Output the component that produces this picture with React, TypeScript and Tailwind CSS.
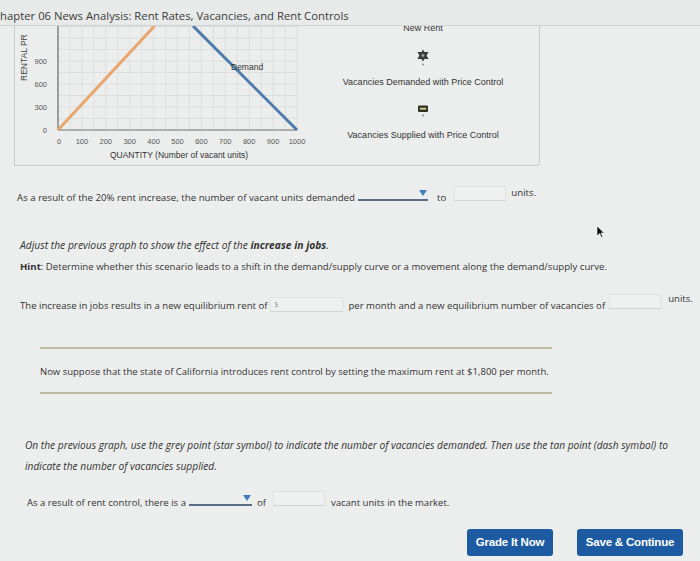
import React from "react";

const xTicks = [0, 100, 200, 300, 400, 500, 600, 700, 800, 900, 1000];
const yTicks = [0, 300, 600, 900];

// plot geometry in page coordinates
const X0 = 58;
const X1 = 297;
const Y0 = 130;
const PX = (X1 - X0) / 1000;
const PY = 23 / 300;

function Chart() {
  const vLines = Array.from({ length: 21 }, (_, i) => X0 + i * PX * 50);
  const hLines = Array.from({ length: 10 }, (_, i) => Y0 - i * PY * 150);
  return (
    <svg width="305" height="139" className="shrink-0 block">
      <g transform="translate(-15,-26)" fontFamily="Liberation Sans, Arial, sans-serif">
        {vLines.map((x, i) => (
          <line key={"v" + i} x1={x} x2={x} y1={20} y2={Y0} stroke="#d9dcdc" strokeWidth="0.8" />
        ))}
        {hLines.map((y, i) => (
          <line key={"h" + i} x1={X0} x2={X1} y1={y} y2={y} stroke="#d9dcdc" strokeWidth="0.8" />
        ))}
        <line x1={X0} x2={X0} y1={20} y2={Y0} stroke="#555" strokeWidth="1" />
        <line x1={X0} x2={X1} y1={Y0} y2={Y0} stroke="#777" strokeWidth="1" />

        {yTicks.map((t) => (
          <text key={t} x={47} y={Y0 - t * PY + 3} fontSize="7.5" fill="#555" textAnchor="end">
            {t}
          </text>
        ))}
        {xTicks.map((t) => (
          <text key={t} x={X0 + t * PX + (t === 0 ? 1 : 0)} y={144} fontSize="7.5" fill="#555" textAnchor="middle">
            {t}
          </text>
        ))}
        <text x={179} y={158} fontSize="8.5" fill="#333" textAnchor="middle">
          QUANTITY (Number of vacant units)
        </text>
        <text x={27} y={81} fontSize="8.5" fill="#444" transform="rotate(-90 27 81)">
          RENTAL PR
        </text>

        {/* supply */}
        <line x1={X0} y1={Y0} x2={X0 + (104 * 90) / 97} y2={26} stroke="#e9a66c" strokeWidth="3" />
        {/* demand */}
        <line x1={X1} y1={Y0} x2={X1 - 104} y2={26} stroke="#4c7cab" strokeWidth="3" />
        <text x={231} y={70} fontSize="8.5" fill="#333">
          Demand
        </text>
      </g>
    </svg>
  );
}

function StarIcon() {
  return (
    <svg width="14" height="17" viewBox="0 0 14 17" className="block">
      <polygon points="7,0.5 12.6,10 1.4,10" fill="#3b3b3b" />
      <polygon points="7,12.5 12.6,3 1.4,3" fill="#3b3b3b" />
      <circle cx="7" cy="6.5" r="1.4" fill="#a0a0a0" />
      <circle cx="7" cy="15.5" r="0.9" fill="#888" />
    </svg>
  );
}

function DashIcon() {
  return (
    <svg width="12" height="14" viewBox="0 0 12 14" className="block">
      <rect x="1" y="1.5" width="10" height="6.5" rx="1" fill="#2f3422" />
      <rect x="2.8" y="3.8" width="6.4" height="1.8" fill="#d9d39a" />
      <circle cx="6" cy="11.5" r="0.9" fill="#888" />
    </svg>
  );
}

function Dropdown({ w }: { w: string }) {
  return (
    <span className={`relative inline-block h-[15px] border-b-2 border-[#5b6d85] ${w}`}>
      <svg width="8" height="6" viewBox="0 0 8 6" className="absolute right-[1px] top-[4px]">
        <polygon points="0,0 8,0 4,6" fill="#3f7fc0" />
      </svg>
    </span>
  );
}

function Blank({ w, children }: { w: string; children?: React.ReactNode }) {
  return (
    <span
      className={`inline-flex h-[15px] items-center border border-[#dfe2e2] border-b-[#d2d5d5] bg-[#eff1f0] pl-[3px] text-[7px] text-[#999] ${w}`}
    >
      {children}
    </span>
  );
}

export default function App() {
  return (
    <div className="relative h-[561px] w-[700px] overflow-hidden bg-[#eceeed] font-['Open_Sans','Liberation_Sans',sans-serif] text-[#333]">
      {/* title bar */}
      <div className="h-[26px] overflow-hidden whitespace-nowrap border-b border-[#cfd2d1] bg-[#e8eae9] pt-[8px]">
        <h1 className="-ml-[7px] text-[11.3px] leading-[16px] text-[#3a3a3a]">
          Chapter 06 News Analysis: Rent Rates, Vacancies, and Rent Controls
        </h1>
      </div>

      {/* graph panel */}
      <div className="ml-[14px] flex h-[140px] w-[526px] overflow-hidden rounded-br-[4px] border border-t-0 border-[#c9cccb]">
        <Chart />
        <div className="flex w-[206px] flex-col items-center font-['Liberation_Sans',Arial,sans-serif] text-[9px] leading-[11px] text-[#333]">
          <div className="-mt-[3px]">New Rent</div>
          <div className="mt-[15px]">
            <StarIcon />
          </div>
          <div className="mt-[11px]">Vacancies Demanded with Price Control</div>
          <div className="mt-[16px]">
            <DashIcon />
          </div>
          <div className="mt-[12px]">Vacancies Supplied with Price Control</div>
        </div>
      </div>

      {/* question 1 */}
      <div className="mt-[23px] flex h-[15px] items-end whitespace-nowrap pl-[17px] text-[9.7px] leading-[13px]">
        <span>As a result of the 20% rent increase, the number of vacant units demanded</span>
        <span className="ml-[3px]">
          <Dropdown w="w-[70px]" />
        </span>
        <span className="ml-[9px]">to</span>
        <span className="ml-[8px]">
          <Blank w="w-[52px]" />
        </span>
        <span className="ml-[5px] self-start -mt-[3px]">units.</span>
      </div>

      <p className="mt-[34px] pl-[20px] text-[10.3px] italic leading-[14px]">
        Adjust the previous graph to show the effect of the <b>increase in jobs</b>.
      </p>
      <p className="mt-[8px] pl-[20px] text-[9.65px] leading-[14px]">
        <b>Hint</b>: Determine whether this scenario leads to a shift in the demand/supply curve or a movement along the
        demand/supply curve.
      </p>

      {/* equilibrium row */}
      <div className="mt-[23px] flex h-[15px] items-end whitespace-nowrap pl-[20px] text-[9.6px] leading-[13px]">
        <span>The increase in jobs results in a new equilibrium rent of</span>
        <span className="ml-[3px]">
          <Blank w="w-[73px]">$</Blank>
        </span>
        <span className="ml-[5px]">per month and a new equilibrium number of vacancies of</span>
        <span className="ml-[4px]">
          <Blank w="w-[52px]" />
        </span>
        <span className="ml-[7px] self-start -mt-[5px]">units.</span>
      </div>

      <div className="ml-[40px] mt-[35px] h-[2px] w-[512px] bg-[#bdbba2]" />
      <p className="mt-[16px] pl-[40px] text-[9.5px] leading-[14px]">
        Now suppose that the state of California introduces rent control by setting the maximum rent at $1,800 per month.
      </p>
      <div className="ml-[40px] mt-[13px] h-[2px] w-[512px] bg-[#bdbba2]" />

      <p className="mt-[41px] whitespace-nowrap pl-[25px] text-[10.2px] italic leading-[21px]">
        On the previous graph, use the grey point (star symbol) to indicate the number of vacancies demanded. Then use the
        tan point (dash symbol) to
        <br />
        indicate the number of vacancies supplied.
      </p>

      <div className="mt-[17px] flex h-[15px] items-end whitespace-nowrap pl-[27px] text-[9.55px] leading-[13px]">
        <span>As a result of rent control, there is a</span>
        <span className="ml-[3px]">
          <Dropdown w="w-[63px]" />
        </span>
        <span className="ml-[5px]">of</span>
        <span className="ml-[7px]">
          <Blank w="w-[52px]" />
        </span>
        <span className="ml-[6px]">vacant units in the market.</span>
      </div>

      <div className="mt-[20px] flex justify-end gap-[24px] pr-[17px] font-['Liberation_Sans',Arial,sans-serif]">
        <button className="h-[27px] w-[86px] rounded-[3px] bg-[#1c5ba1] text-[11.5px] font-bold tracking-[-0.2px] text-white">
          Grade It Now
        </button>
        <button className="h-[27px] w-[106px] rounded-[3px] bg-[#1c5ba1] text-[11.5px] font-bold tracking-[-0.2px] text-white">
          Save &amp; Continue
        </button>
      </div>

      {/* mouse pointer */}
      <svg width="9" height="13" viewBox="0 0 9 13" className="absolute left-[596px] top-[225px]">
        <polygon points="1,1 1,11 3.6,8.6 5.4,12.4 6.8,11.8 5,8 8.2,8" fill="#111" stroke="#fff" strokeWidth="0.6" />
      </svg>
    </div>
  );
}
